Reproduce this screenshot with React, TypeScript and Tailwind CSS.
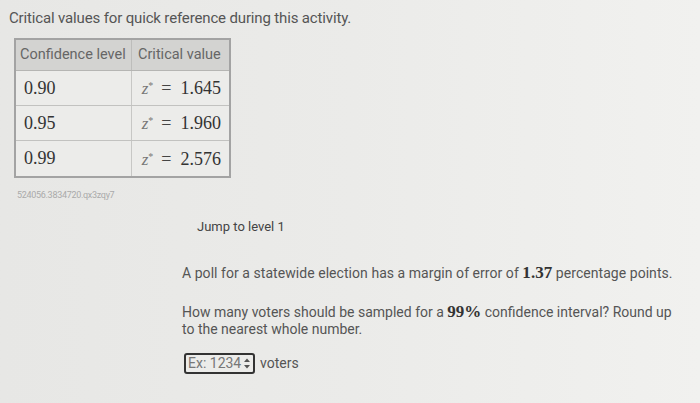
import React from "react";

function Z({ v }: { v: string }) {
  return (
    <span className="font-['Liberation_Serif',serif] text-[#333] leading-none">
      <span className="italic text-[#777] text-[17px]">z</span>
      <sup className="text-[10px] text-[#777]">*</sup>
      <span className="ml-[8px] mr-[9px] text-[18px] text-[#444]">=</span>
      <span className="text-[18px]">{v}</span>
    </span>
  );
}

export default function App() {
  const rows = [
    ["0.90", "1.645"],
    ["0.95", "1.960"],
    ["0.99", "2.576"],
  ];
  return (
    <div className="w-[700px] h-[403px] overflow-hidden bg-linear-to-r from-[#e7e7e5] via-[#ebebe9] to-[#f1f1ef] font-['Roboto',sans-serif] relative">
      <div className="pl-[9px] pt-[8px] text-[15px] text-[#555] leading-[20px] tracking-[-0.15px]">
        Critical values for quick reference during this activity.
      </div>
      <div className="ml-[14px] mt-[10px] w-[217px] border-2 border-[#a3a3a3] bg-[#ececea]">
        <div className="flex h-[31px] bg-[#d3d3d1] border-b border-[#b5b5b3] text-[14.5px] text-[#666]">
          <div className="w-[116px] border-r border-[#bdbdbb] flex items-center pl-[4px] whitespace-nowrap">Confidence level</div>
          <div className="flex-1 flex items-center pl-[6px] whitespace-nowrap">Critical value</div>
        </div>
        {rows.map(([c, v], i) => (
          <div key={c} className={`flex h-[35px] ${i < 2 ? "border-b border-[#c2c2c0]" : ""}`}>
            <div className="w-[116px] border-r border-[#c7c7c5] flex items-center pl-[8px] font-['Liberation_Serif',serif] text-[18px] text-[#333]">
              {c}
            </div>
            <div className="flex-1 flex items-center justify-end pr-[8px]">
              <Z v={v} />
            </div>
          </div>
        ))}
      </div>
      <div className="pl-[17px] mt-[11px] text-[9px] leading-[12px] text-[#aaa] tracking-[-0.3px]">524056.3834720.qx3zqy7</div>
      <div className="ml-[182px] mt-[16px] text-[#444]">
        <div className="pl-[15px] text-[13px]">Jump to level 1</div>
        <div className="mt-[26px] text-[14px] leading-[20px] text-[#555] tracking-[0.05px] whitespace-nowrap">
          A poll for a statewide election has a margin of error of{" "}
          <span className="font-['Liberation_Serif',serif] text-[17px] leading-[17px] text-[#333] font-semibold">1.37</span> percentage points.
        </div>
        <div className="mt-[21px] text-[14px] leading-[17px] text-[#555]">
          <div className="whitespace-nowrap">
            How many voters should be sampled for a{" "}
            <span className="font-['Liberation_Serif',serif] text-[17px] leading-[14px] text-[#333] font-semibold">99%</span> confidence interval? Round up
          </div>
          <div>to the nearest whole number.</div>
        </div>
        <div className="mt-[15px] flex items-center gap-[5px] pl-[2px]">
          <div className="w-[71px] h-[21px] border-2 border-[#333] rounded-[3px] flex items-center pl-[2px] text-[14px] text-[#777] bg-[#ececea]">
            <span className="flex-1">Ex: 1234</span>
            <svg width="8" height="13" viewBox="0 0 8 13" className="mr-[2px]">
              <path d="M1 5 L4 1.5 L7 5 Z" fill="#555" />
              <path d="M1 8 L4 11.5 L7 8 Z" fill="#555" />
            </svg>
          </div>
          <span className="text-[14px] text-[#555]">voters</span>
        </div>
      </div>
    </div>
  );
}
